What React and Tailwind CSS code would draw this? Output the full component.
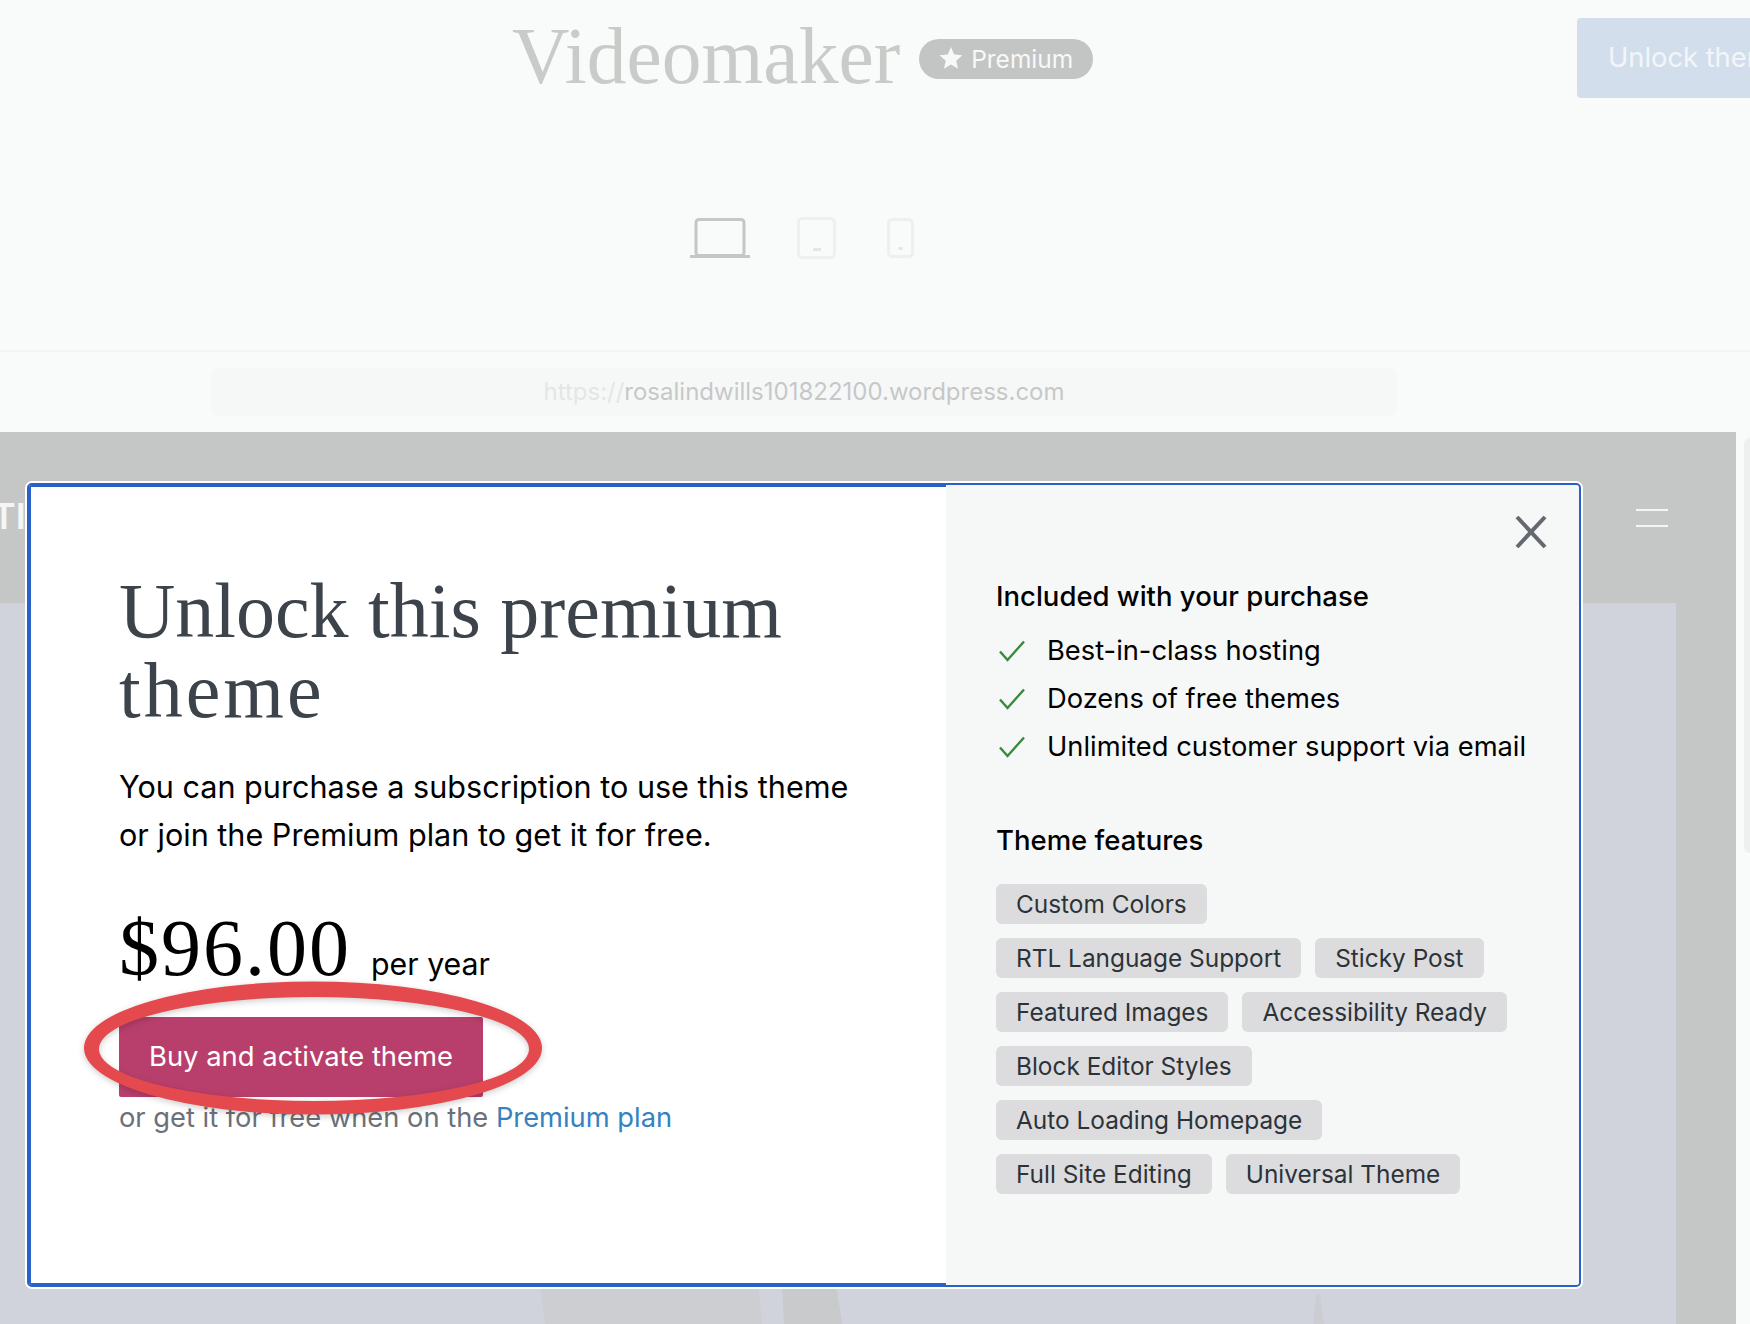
import React from "react";

const includedItems = [
  "Best-in-class hosting",
  "Dozens of free themes",
  "Unlimited customer support via email",
];

const featureRows = [
  ["Custom Colors"],
  ["RTL Language Support", "Sticky Post"],
  ["Featured Images", "Accessibility Ready"],
  ["Block Editor Styles"],
  ["Auto Loading Homepage"],
  ["Full Site Editing", "Universal Theme"],
];

const Check = () => (
  <svg width="28" height="24" viewBox="0 0 28 24" fill="none" className="shrink-0 ml-[2px]">
    <path d="M2 12.5 L9.5 21 L26 2.5" stroke="#378a3c" strokeWidth="2.4" />
  </svg>
);

const DeviceIcons = () => (
  <div className="flex items-center mt-[119px] ml-[690px]">
    <svg width="60" height="40" viewBox="0 0 60 40" fill="none">
      <rect x="6" y="1.5" width="48" height="36" rx="3" stroke="#c5c7c6" strokeWidth="3" />
      <rect x="0" y="37" width="60" height="3" fill="#c5c7c6" />
    </svg>
    <svg width="40" height="42" viewBox="0 0 40 42" fill="none" className="ml-[47px]">
      <rect x="1.5" y="1.5" width="36" height="39" rx="4" stroke="#eeefef" strokeWidth="3" />
      <rect x="16" y="31" width="8" height="3" fill="#e4e5e5" />
    </svg>
    <svg width="27" height="40" viewBox="0 0 27 40" fill="none" className="ml-[50px]">
      <rect x="1.5" y="1.5" width="24" height="37" rx="4" stroke="#eeefef" strokeWidth="3" />
      <rect x="11.5" y="29" width="4" height="3" fill="#e4e5e5" />
    </svg>
  </div>
);

const App = () => {
  return (
    <div className="relative flex flex-col h-[1324px] w-[1750px] overflow-hidden bg-[#f9fbfa] font-['Inter',sans-serif]">
      {/* Faded page header */}
      <div className="h-[352px] shrink-0 border-b-2 border-[#f3f4f4]">
        <div className="flex items-start h-[98px]">
          <div className="flex items-center ml-[512px] mt-[18px] h-[80px] -translate-y-[1px]">
            <span className="font-['Liberation_Serif',serif] text-[79.5px] leading-none text-[#c9cbc9]">
              Videomaker
            </span>
            <span className="flex items-center gap-[8px] ml-[19px] mt-[4px] h-[40px] w-[174px] pl-[20px] rounded-[20px] bg-[#c3c5c4] text-[24.5px] text-[#f7f8f8]">
              <svg width="24" height="24" viewBox="0 0 24 24" fill="#f7f8f8" className="shrink-0 -mt-[2px]">
                <path d="M12 1 L15.2 8.6 L23.5 9.3 L17.2 14.7 L19.1 22.8 L12 18.5 L4.9 22.8 L6.8 14.7 L0.5 9.3 L8.8 8.6 Z" />
              </svg>
              Premium
            </span>
          </div>
          <div className="ml-auto mt-[18px] w-[173px] h-[80px] pl-[31px] flex items-center overflow-hidden whitespace-nowrap rounded-l-[4px] bg-[#d2deec] text-[27.3px] text-[#f2f6fa]">
            Unlock theme
          </div>
        </div>
        <DeviceIcons />
      </div>

      {/* Address bar */}
      <div className="h-[80px] shrink-0 pt-[16px] pl-[210px]">
        <div className="flex items-center justify-center w-[1188px] h-[48px] rounded-[10px] bg-[#f6f8f8] text-[24px]">
          <span className="text-[#e4e6e6]">https://</span>
          <span className="text-[#c6c8c8]">rosalindwills101822100.wordpress.com</span>
        </div>
      </div>

      {/* Site preview behind the modal */}
      <div className="flex flex-1">
        <div className="flex flex-col w-[1736px] bg-[#c5c7c6]">
          <div className="relative h-[171px] shrink-0">
            <span className="absolute left-[-8px] top-[66px] text-[36px] font-semibold leading-none text-[#f4f5f5]">
              TI
            </span>
            <div className="absolute left-[1636px] top-[77px] w-[32px] h-[18px] border-y-2 border-[#f4f5f5]" />
          </div>
          <div className="relative flex-1 w-[1676px] bg-[#d0d3dc] overflow-hidden">
            <svg width="1676" height="721" viewBox="0 0 1676 721" fill="none" className="absolute inset-0">
              <path d="M545 721 L540 680 L758 680 L762 721 Z" fill="#cdced2" />
              <path d="M784 721 L782 680 L836 680 L842 721 Z" fill="#c9cacb" />
              <path d="M1313 721 L1316 692 L1320 692 L1324 721 Z" fill="#cccdd3" />
            </svg>
          </div>
        </div>
        <div className="flex-1 pt-[6px] pl-[8px]">
          <div className="h-[415px] rounded-l-[6px] bg-[#eeefef]" />
        </div>
      </div>

      {/* Modal */}
      <div className="absolute left-[25px] top-[481px] w-[1558px] h-[808px] rounded-[7px] border-2 border-white">
        <div className="flex h-full rounded-[5px] border-2 border-[#2862c8] overflow-hidden">
          <div className="w-[917px] shrink-0 border-2 border-r-0 border-[#2862c8] bg-white pl-[88px] pt-[84px]">
            <h1 className="font-['Liberation_Serif',serif] text-[78px] leading-[80px] text-[#3c434a]">
              Unlock this premium
              <br />
              <span className="tracking-[3px]">theme</span>
            </h1>
            <p className="mt-[32px] text-[30.6px] leading-[48px] text-black">
              You can purchase a subscription to use this theme
              <br />
              or join the Premium plan to get it for free.
            </p>
            <div className="flex items-baseline mt-[44px] h-[90px] leading-[90px]">
              <span className="font-['Liberation_Serif',serif] text-[80px] tracking-[2px] text-black">$96.00</span>
              <span className="ml-[20px] text-[30.3px] text-black">per year</span>
            </div>
            <div className="flex items-center justify-center mt-[24px] w-[364px] h-[80px] rounded-[2px] bg-[#b83f6c] text-[27.4px] text-white">
              Buy and activate theme
            </div>
            <p className="mt-[5px] text-[27.3px] leading-[32px] text-[#6b7079]">
              or get it for free when on the <span className="text-[#3582bf]">Premium plan</span>
            </p>
          </div>

          <div className="relative flex-1 bg-[#f6f7f7] pl-[50px] pt-[94px]">
            <button className="absolute left-[569px] top-[31px]">
              <svg width="32" height="32" viewBox="0 0 32 32" fill="none" stroke="#646970" strokeWidth="4">
                <path d="M2 1 L30 31 M30 1 L2 31" />
              </svg>
            </button>
            <h2 className="text-[27.5px] leading-[34px] font-medium text-black">Included with your purchase</h2>
            <ul className="mt-[18px] flex flex-col gap-[8px] text-[27.3px] text-black">
              {includedItems.map((item) => (
                <li key={item} className="flex items-center h-[40px]">
                  <Check />
                  <span className="ml-[21px]">{item}</span>
                </li>
              ))}
            </ul>
            <h2 className="mt-[56px] text-[27.5px] leading-[34px] font-medium text-black">Theme features</h2>
            <div className="mt-[27px] flex flex-col gap-[14px]">
              {featureRows.map((row) => (
                <div key={row[0]} className="flex gap-[14px]">
                  {row.map((chip) => (
                    <span
                      key={chip}
                      className="flex items-center h-[40px] px-[20px] rounded-[6px] bg-[#dcdcde] text-[24.4px] text-[#2c3338]"
                    >
                      {chip}
                    </span>
                  ))}
                </div>
              ))}
            </div>
          </div>
        </div>
      </div>

      {/* Red annotation ring */}
      <svg width="490" height="160" viewBox="0 0 490 160" className="absolute left-[70px] top-[970px] drop-shadow-[0_2px_3px_rgba(0,0,0,0.2)]">
        <path
          fillRule="evenodd"
          fill="#e4494d"
          d="M14 78 A229 66.5 0 1 1 472 78 A229 66.5 0 1 1 14 78 Z M29 79 A215 52 0 1 0 459 79 A215 52 0 1 0 29 79 Z"
        />
      </svg>
    </div>
  );
};

export default App;
